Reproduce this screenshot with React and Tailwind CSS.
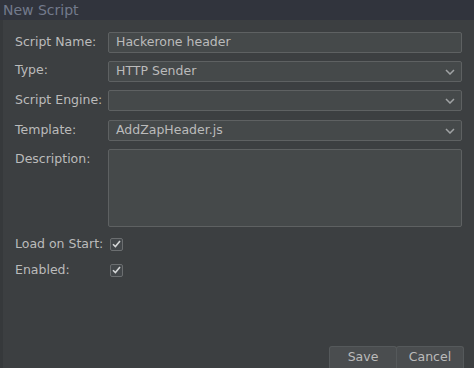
import React from "react";

const Chevron = () => (
  <svg width="10" height="6" viewBox="0 0 10 6" className="shrink-0">
    <path d="M1 1 L5 5 L9 1" fill="none" stroke="#a0a3a5" strokeWidth="1.5" />
  </svg>
);

const Check = () => (
  <svg width="9" height="8" viewBox="0 0 9 8">
    <path d="M1 4.2 L3.4 6.6 L8 1" fill="none" stroke="#d4d6d7" strokeWidth="1.6" />
  </svg>
);

const Label = ({ children, className = "" }) => (
  <div className={`w-[93px] shrink-0 text-[12.5px] text-[#bbbbbb] ${className}`}>{children}</div>
);

const Field = ({ value }) => (
  <div className="flex h-[21px] flex-1 items-center rounded-[2px] border border-[#5e6162] bg-[#45494a] px-[7px] text-[12.5px] text-[#bbbbbb]">
    {value}
  </div>
);

const Select = ({ value }) => (
  <div className="flex h-[21px] flex-1 items-center justify-between rounded-[2px] border border-[#5e6162] bg-[#45494a] pl-[7px] pr-[6px] text-[12.5px] text-[#bbbbbb]">
    <span>{value}</span>
    <Chevron />
  </div>
);

const Box = () => (
  <div className="flex h-[13px] w-[13px] items-center justify-center rounded-[2px] border border-[#6b6e70] bg-[#43474a]">
    <Check />
  </div>
);

export default function App() {
  return (
    <div
      className="flex h-[368px] w-[474px] flex-col overflow-hidden bg-[#3c3f41]"
      style={{ fontFamily: '"DejaVu Sans", sans-serif' }}
    >
      <div className="flex h-[20px] shrink-0 items-center bg-[#31343d] pl-[3px] text-[14px] text-[#737a8c]">
        New Script
      </div>
      <div className="flex flex-1">
        <div className="w-[3px] shrink-0 bg-[#36393b]" />
        <div className="flex flex-1 flex-col pl-[12px] pr-[12px] pt-[12px]">
          <div className="flex items-center">
            <Label>Script Name:</Label>
            <Field value="Hackerone header" />
          </div>
          <div className="mt-[8px] flex items-center">
            <Label className="-mt-[3px]">Type:</Label>
            <Select value="HTTP Sender" />
          </div>
          <div className="mt-[8px] flex items-center">
            <Label>Script Engine:</Label>
            <Select value="" />
          </div>
          <div className="mt-[9px] flex items-center">
            <Label>Template:</Label>
            <Select value="AddZapHeader.js" />
          </div>
          <div className="mt-[8px] flex">
            <Label className="pt-[1px]">Description:</Label>
            <div className="h-[78px] flex-1 rounded-[2px] border border-[#5e6162] bg-[#45494a]" />
          </div>
          <div className="mt-[8px] flex h-[18px] items-center">
            <Label>Load on Start:</Label>
            <div className="pl-[2px]">
              <Box />
            </div>
          </div>
          <div className="mt-[8px] flex h-[18px] items-center">
            <Label>Enabled:</Label>
            <div className="pl-[2px]">
              <Box />
            </div>
          </div>
          <div className="mt-auto flex justify-end gap-[1px]">
            <div className="mr-[-2px] flex h-[22px] w-[68px] items-center justify-center rounded-t-[3px] border border-b-0 border-[#55595b] bg-[#4a4d4f] text-[12.5px] text-[#bbbbbb]">
              Save
            </div>
            <div className="mr-[-2px] flex h-[22px] w-[68px] items-center justify-center rounded-t-[3px] border border-b-0 border-[#55595b] bg-[#4a4d4f] text-[12.5px] text-[#bbbbbb]">
              Cancel
            </div>
          </div>
        </div>
      </div>
    </div>
  );
}
